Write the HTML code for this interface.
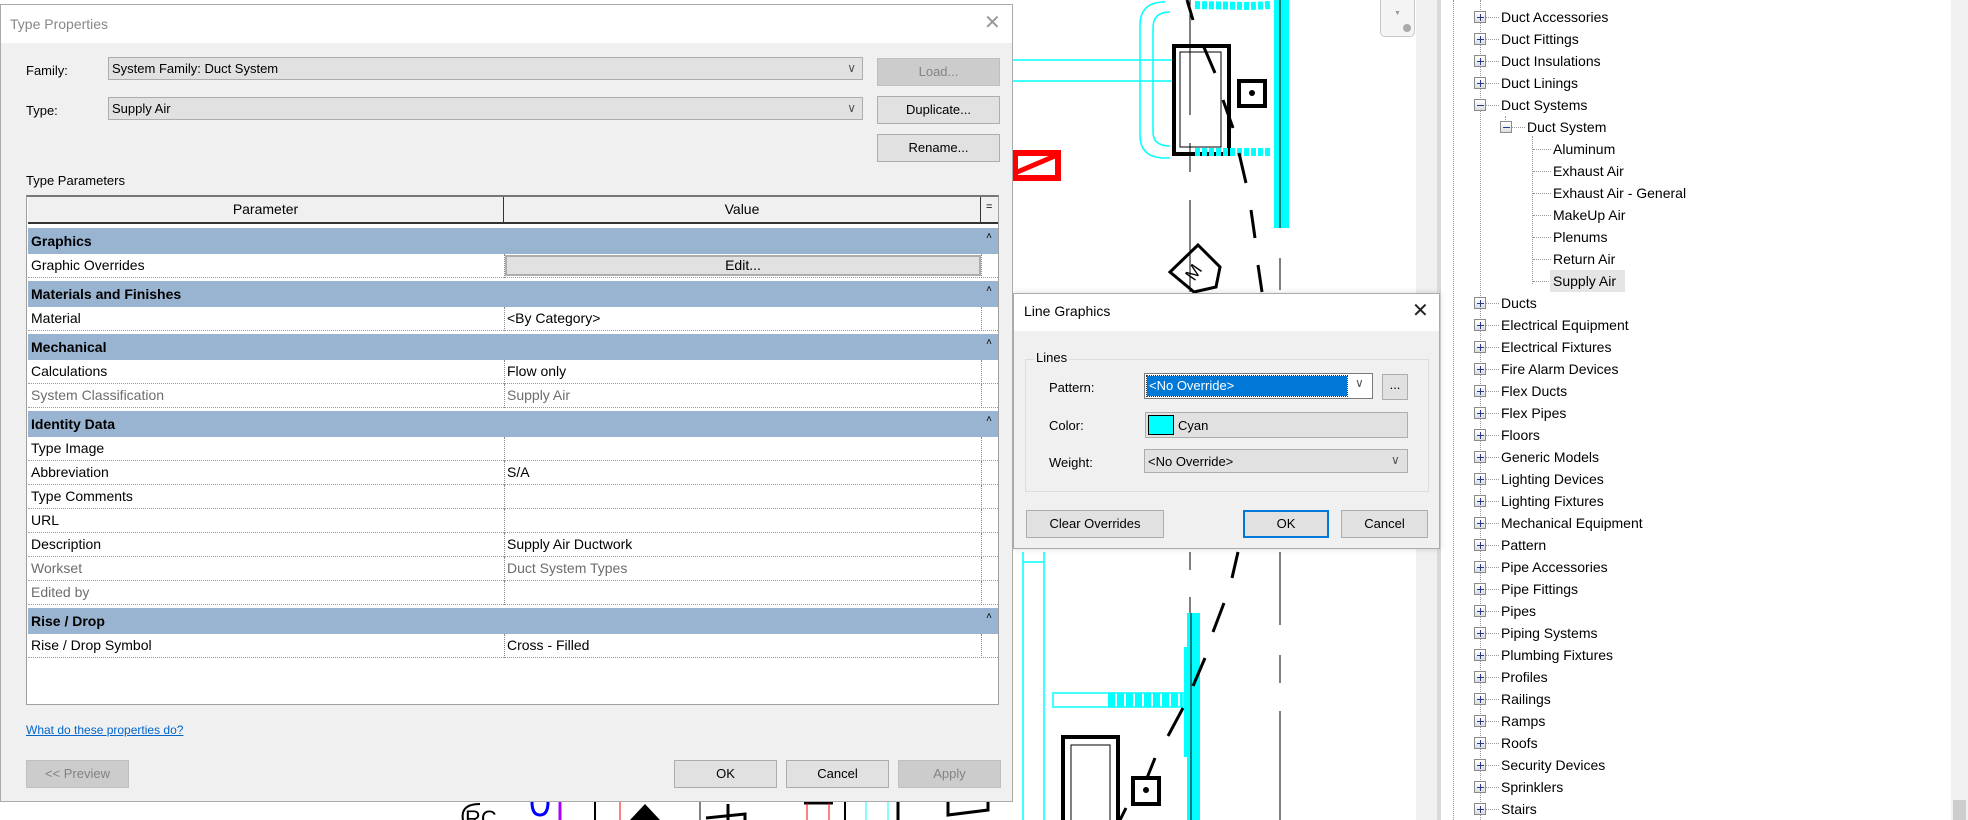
<!DOCTYPE html>
<html><head><meta charset="utf-8">
<style>
*{box-sizing:border-box;margin:0;padding:0}
body{width:1968px;height:820px;overflow:hidden;background:#fff;font-family:"Liberation Sans",sans-serif;font-size:13px;color:#000;position:relative}
.a{position:absolute}
.btn{position:absolute;background:#e1e1e1;border:1px solid #adadad;text-align:center;font-size:13px}
.dis{background:#cccccc;border-color:#bfbfbf;color:#838383}
.band{position:absolute;left:27px;width:970px;height:26px;background:#99b4d1;font-weight:bold;font-size:14px;line-height:26px;padding-left:3px}
.band:after{content:"\02C4";position:absolute;right:6px;top:-4px;font-size:10px;font-weight:normal}
.row{position:absolute;left:27px;width:970px;height:24px;border-bottom:1px dotted #999;font-size:14px;line-height:22px;background:#fff}
.row span{position:absolute;left:3px}
.row .v{left:479px}
.row:before{content:"";position:absolute;left:476px;top:0;height:24px;border-left:1px dotted #888}
.row:after{content:"";position:absolute;left:953px;top:0;height:24px;border-left:1px dotted #888}
.g{color:#6d6d6d}
.ti{position:absolute;font-size:14px;line-height:18px}
.pb{position:absolute;width:12px;height:12px;border:1px solid #8a8a8a;background:linear-gradient(#fff,#ddd)}
.pb:before{content:"";position:absolute;left:2px;top:5px;width:7px;height:1px;background:#2a3a8a}
.pb.p:after{content:"";position:absolute;left:5px;top:2px;width:1px;height:7px;background:#2a3a8a}
.dh{position:absolute;height:0;border-top:1px dotted #999}
.dv{position:absolute;width:0;border-left:1px dotted #999}
</style></head><body>

<!-- CAD drawing background -->
<svg class="a" style="left:0;top:0" width="1968" height="820">
<!-- top cad -->
<line x1="1013" y1="60" x2="1175" y2="60" stroke="#0ff" stroke-width="1.5"/>
<line x1="1013" y1="81" x2="1175" y2="81" stroke="#0ff" stroke-width="1.5"/>
<path d="M1165 2 Q1140 2 1140 25 L1140 135 Q1140 158 1165 158 L1170 158" fill="none" stroke="#0ff" stroke-width="1.5"/>
<path d="M1170 12 Q1153 12 1153 28 L1153 132 Q1153 146 1170 146" fill="none" stroke="#0ff" stroke-width="1.5"/>
<rect x="1174" y="46" width="55" height="108" fill="none" stroke="#000" stroke-width="4"/>
<rect x="1180" y="52" width="41" height="95" fill="none" stroke="#000" stroke-width="1"/>
<line x1="1190" y1="0" x2="1190" y2="115" stroke="#000" stroke-width="1"/>
<line x1="1190" y1="143" x2="1190" y2="172" stroke="#000" stroke-width="1"/>
<line x1="1190" y1="200" x2="1190" y2="292" stroke="#000" stroke-width="1"/>
<rect x="1239" y="81" width="26" height="25" fill="none" stroke="#000" stroke-width="4"/>
<circle cx="1252" cy="93" r="3" fill="#000"/>
<path d="M1195 5 L1250 6 L1270 5" stroke="#0ff" stroke-width="8" stroke-dasharray="5 2" fill="none"/>
<path d="M1195 152 L1270 152" stroke="#0ff" stroke-width="8" stroke-dasharray="5 2" fill="none"/>
<rect x="1274" y="0" width="15" height="228" fill="#0ff"/>
<line x1="1280" y1="0" x2="1280" y2="228" stroke="#000" stroke-width="1"/>
<rect x="1015" y="153" width="43" height="25" fill="none" stroke="#f00" stroke-width="6"/>
<line x1="1015" y1="173" x2="1055" y2="156" stroke="#f00" stroke-width="5"/>
<path d="M1187 0 L1193 20 M1203 45 L1215 73 M1223 100 L1233 128 M1239 153 L1246 183 M1251 210 L1255 238" stroke="#000" stroke-width="3"/>
<path d="M1258 265 L1262 292" stroke="#000" stroke-width="3"/>
<line x1="1280" y1="258" x2="1280" y2="290" stroke="#000" stroke-width="1"/>
<path d="M1198 245 L1220 267 L1216 287 L1194 292 L1170 272 Z" fill="none" stroke="#000" stroke-width="3"/>
<text x="1186" y="280" font-size="18" transform="rotate(-55 1192 273)" font-family="Liberation Sans">M</text>
<!-- bottom cad -->
<line x1="1023" y1="552" x2="1023" y2="820" stroke="#0ff" stroke-width="1.5"/>
<line x1="1044" y1="552" x2="1044" y2="820" stroke="#0ff" stroke-width="1.5"/>
<line x1="1023" y1="562" x2="1044" y2="562" stroke="#0ff" stroke-width="1.5"/>
<line x1="1190" y1="552" x2="1190" y2="570" stroke="#000"/>
<line x1="1190" y1="597" x2="1190" y2="820" stroke="#000"/>
<line x1="1280" y1="552" x2="1280" y2="625" stroke="#000"/>
<line x1="1280" y1="655" x2="1280" y2="683" stroke="#000"/>
<line x1="1280" y1="711" x2="1280" y2="820" stroke="#000"/>
<rect x="1187" y="613" width="13" height="207" fill="#0ff"/>
<rect x="1184" y="647" width="16" height="110" fill="#0ff"/>
<line x1="1191" y1="613" x2="1191" y2="820" stroke="#000"/>
<rect x="1053" y="693" width="130" height="14" fill="none" stroke="#0ff" stroke-width="1.5"/>
<path d="M1108 700 L1182 700" stroke="#0ff" stroke-width="14" stroke-dasharray="7 2"/>
<path d="M1238 552 L1232 578 M1224 603 L1213 632 M1205 658 L1193 686 M1183 708 L1168 736 M1155 758 L1147 778 M1126 808 L1120 820" stroke="#000" stroke-width="3"/>
<path d="M1063 820 L1063 737 L1118 737 L1118 820" fill="none" stroke="#000" stroke-width="4"/>
<rect x="1071" y="745" width="39" height="80" fill="none" stroke="#000" stroke-width="1"/>
<rect x="1133" y="778" width="26" height="26" fill="none" stroke="#000" stroke-width="4"/>
<circle cx="1146" cy="790" r="3" fill="#000"/>
<!-- below type properties -->
<path d="M463 820 Q460 804 480 804" fill="none" stroke="#000" stroke-width="2"/>
<text x="465" y="826" font-size="22" font-family="Liberation Sans">RC</text>
<path d="M532 802 Q532 815 540 815 Q548 815 548 802" fill="none" stroke="#00f" stroke-width="3"/>
<line x1="560" y1="802" x2="560" y2="820" stroke="#a0f" stroke-width="3"/>
<line x1="595" y1="802" x2="595" y2="820" stroke="#000" stroke-width="2"/>
<line x1="620" y1="802" x2="620" y2="820" stroke="#f00" stroke-width="1"/>
<path d="M630 820 L645 804 L660 820 Z" fill="#000"/>
<line x1="700" y1="802" x2="700" y2="820" stroke="#000"/>
<path d="M706 818 L745 814 L745 820 M728 804 L728 820" fill="none" stroke="#000" stroke-width="3"/>
<path d="M804 803 L833 803" stroke="#000" stroke-width="3"/>
<line x1="807" y1="803" x2="807" y2="820" stroke="#f00"/>
<line x1="829" y1="803" x2="829" y2="820" stroke="#f00"/>
<line x1="845" y1="802" x2="845" y2="820" stroke="#000" stroke-width="2"/>
<line x1="866" y1="802" x2="866" y2="820" stroke="#0ff"/>
<line x1="888" y1="802" x2="888" y2="820" stroke="#0ff"/>
<line x1="898" y1="802" x2="898" y2="820" stroke="#000" stroke-width="3"/>
<path d="M948 802 L948 815 L988 810 L988 802" fill="none" stroke="#000" stroke-width="3"/>
</svg>

<!-- zoom nav widget -->
<div class="a" style="left:1380px;top:-6px;width:35px;height:43px;border:1px solid #c8c8c8;border-radius:5px;background:#f4f4f4"></div>
<div class="a" style="left:1394px;top:10px;font-size:7px;color:#999">&#9660;</div>
<div class="a" style="left:1403px;top:24px;width:8px;height:8px;border-radius:50%;background:#aaa"></div>
<!-- gray strip -->
<div class="a" style="left:1416px;top:0;width:21px;height:820px;background:#f0f0f0"></div>
<div class="a" style="left:1437px;top:0;width:4px;height:820px;background:#d9d9d9"></div>

<!-- project browser tree -->
<div class="a" style="left:1441px;top:0;width:510px;height:820px;background:#fff"></div>
<div class="a" style="left:1951px;top:0;width:17px;height:820px;background:#f0f0f0"></div>
<div class="a" style="left:1953px;top:800px;width:13px;height:20px;background:#cdcdcd"></div>
<div class="dv" style="left:1453px;top:0;height:820px"></div>
<div class="dv" style="left:1480px;top:0;height:820px"></div>
<div class="dv" style="left:1505px;top:116px;height:6px"></div>
<div class="dv" style="left:1532px;top:136px;height:148px"></div>
<div id="tree"></div>

<!-- Line Graphics dialog -->
<div class="a" style="left:1013px;top:293px;width:427px;height:256px;background:#f0f0f0;border:1px solid #aaa;box-shadow:0 0 6px rgba(0,0,0,.15)">
  <div class="a" style="left:0;top:0;width:425px;height:37px;background:#fff"></div>
  <div class="a" style="left:10px;top:9px;font-size:14px">Line Graphics</div>
  <div class="a" style="left:398px;top:4px;font-size:20px;font-weight:100;color:#222">&#x2715;</div>
  <div class="a" style="left:11px;top:65px;width:404px;height:133px;border:1px solid #dcdcdc"></div>
  <div class="a" style="left:20px;top:56px;background:#f0f0f0;padding:0 2px;font-size:13px">Lines</div>
  <div class="a" style="left:35px;top:86px;font-size:13px">Pattern:</div>
  <div class="a" style="left:35px;top:124px;font-size:13px">Color:</div>
  <div class="a" style="left:35px;top:161px;font-size:13px">Weight:</div>
  <div class="a" style="left:130px;top:79px;width:229px;height:26px;background:#fff;border:1px solid #7a7a7a">
    <div class="a" style="left:2px;top:2px;width:200px;height:20px;background:#0078d7;outline:1px dotted #333;color:#fff;font-size:13px;line-height:20px;padding-left:2px">&lt;No Override&gt;</div>
    <div class="a" style="left:210px;top:2px;font-size:12px;color:#555">&#x2228;</div>
  </div>
  <div class="btn" style="left:368px;top:80px;width:26px;height:26px;line-height:20px">...</div>
  <div class="a" style="left:131px;top:118px;width:263px;height:26px;background:#e1e1e1;border:1px solid #adadad">
    <div class="a" style="left:2px;top:2px;width:26px;height:20px;background:#0ff;border:1px solid #000"></div>
    <div class="a" style="left:32px;top:5px;font-size:13px">Cyan</div>
  </div>
  <div class="a" style="left:130px;top:155px;width:264px;height:24px;background:#e1e1e1;border:1px solid #adadad">
    <div class="a" style="left:3px;top:4px;font-size:13px">&lt;No Override&gt;</div>
    <div class="a" style="left:246px;top:3px;font-size:12px;color:#555">&#x2228;</div>
  </div>
  <div class="btn" style="left:12px;top:216px;width:138px;height:28px;line-height:26px">Clear Overrides</div>
  <div class="btn" style="left:229px;top:216px;width:86px;height:28px;line-height:24px;border:2px solid #0078d7">OK</div>
  <div class="btn" style="left:327px;top:216px;width:87px;height:28px;line-height:26px">Cancel</div>
</div>

<!-- Type Properties dialog -->
<div class="a" style="left:0;top:4px;width:1013px;height:798px;background:#f0f0f0;border:1px solid #aaa">
  <div class="a" style="left:0;top:0;width:1011px;height:38px;background:#fff"></div>
  <div class="a" style="left:9px;top:11px;font-size:14px;color:#888">Type Properties</div>
  <div class="a" style="left:983px;top:5px;font-size:20px;color:#999">&#x2715;</div>
  <div class="a" style="left:25px;top:58px;font-size:13px">Family:</div>
  <div class="a" style="left:25px;top:98px;font-size:13px">Type:</div>
  <div class="a" style="left:107px;top:52px;width:755px;height:23px;background:#e1e1e1;border:1px solid #adadad;font-size:13px;line-height:21px;padding-left:3px">System Family: Duct System<span class="a" style="right:6px;top:0;color:#555;font-size:12px">&#x2228;</span></div>
  <div class="a" style="left:107px;top:92px;width:755px;height:23px;background:#e1e1e1;border:1px solid #adadad;font-size:13px;line-height:21px;padding-left:3px">Supply Air<span class="a" style="right:6px;top:0;color:#555;font-size:12px">&#x2228;</span></div>
  <div class="btn dis" style="left:876px;top:53px;width:123px;height:28px;line-height:26px">Load...</div>
  <div class="btn" style="left:876px;top:91px;width:123px;height:28px;line-height:26px">Duplicate...</div>
  <div class="btn" style="left:876px;top:129px;width:123px;height:28px;line-height:26px">Rename...</div>
  <div class="a" style="left:25px;top:168px;font-size:13px">Type Parameters</div>
  <!-- grid -->
  <div class="a" style="left:25px;top:190px;width:973px;height:510px;background:#fff;border:1px solid #a0a0a0;border-top:2px solid #777"></div>
  <div class="a" style="left:27px;top:192px;width:970px;height:27px;background:#f0f0f0;border-bottom:2px solid #333;font-size:14px">
    <div class="a" style="left:0;top:0;width:476px;height:25px;text-align:center;line-height:25px;border-right:1px solid #333">Parameter</div>
    <div class="a" style="left:476px;top:0;width:477px;height:25px;text-align:center;line-height:25px;border-right:1px solid #333">Value</div>
    <div class="a" style="left:958px;top:4px;font-size:11px">=</div>
  </div>
  <div class="band" style="top:223px">Graphics</div>
  <div class="row" style="top:249px"><span>Graphic Overrides</span><div class="a" style="left:477px;top:1px;width:476px;height:21px;background:#e1e1e1;border:2px solid #adadad;text-align:center;line-height:17px">Edit...</div></div>
  <div class="band" style="top:276px">Materials and Finishes</div>
  <div class="row" style="top:302px"><span>Material</span><span class="v">&lt;By Category&gt;</span></div>
  <div class="band" style="top:329px">Mechanical</div>
  <div class="row" style="top:355px"><span>Calculations</span><span class="v">Flow only</span></div>
  <div class="row g" style="top:379px"><span>System Classification</span><span class="v">Supply Air</span></div>
  <div class="band" style="top:406px">Identity Data</div>
  <div class="row" style="top:432px"><span>Type Image</span></div>
  <div class="row" style="top:456px"><span>Abbreviation</span><span class="v">S/A</span></div>
  <div class="row" style="top:480px"><span>Type Comments</span></div>
  <div class="row" style="top:504px"><span>URL</span></div>
  <div class="row" style="top:528px"><span>Description</span><span class="v">Supply Air Ductwork</span></div>
  <div class="row g" style="top:552px"><span>Workset</span><span class="v">Duct System Types</span></div>
  <div class="row g" style="top:576px"><span>Edited by</span></div>
  <div class="band" style="top:603px">Rise / Drop</div>
  <div class="row" style="top:629px"><span>Rise / Drop Symbol</span><span class="v">Cross - Filled</span></div>
  <div class="a" style="left:25px;top:718px;font-size:12px;color:#0066cc;text-decoration:underline">What do these properties do?</div>
  <div class="btn dis" style="left:25px;top:755px;width:103px;height:28px;line-height:26px">&lt;&lt; Preview</div>
  <div class="btn" style="left:673px;top:755px;width:103px;height:28px;line-height:26px">OK</div>
  <div class="btn" style="left:785px;top:755px;width:103px;height:28px;line-height:26px">Cancel</div>
  <div class="btn dis" style="left:897px;top:755px;width:103px;height:28px;line-height:26px">Apply</div>
</div>

<script>
var items=[["Duct Accessories",0,1],["Duct Fittings",0,1],["Duct Insulations",0,1],["Duct Linings",0,1],["Duct Systems",0,2],["Duct System",1,2],["Aluminum",2,0],["Exhaust Air",2,0],["Exhaust Air - General",2,0],["MakeUp Air",2,0],["Plenums",2,0],["Return Air",2,0],["Supply Air",2,3],["Ducts",0,1],["Electrical Equipment",0,1],["Electrical Fixtures",0,1],["Fire Alarm Devices",0,1],["Flex Ducts",0,1],["Flex Pipes",0,1],["Floors",0,1],["Generic Models",0,1],["Lighting Devices",0,1],["Lighting Fixtures",0,1],["Mechanical Equipment",0,1],["Pattern",0,1],["Pipe Accessories",0,1],["Pipe Fittings",0,1],["Pipes",0,1],["Piping Systems",0,1],["Plumbing Fixtures",0,1],["Profiles",0,1],["Railings",0,1],["Ramps",0,1],["Roofs",0,1],["Security Devices",0,1],["Sprinklers",0,1],["Stairs",0,1]];
var h="";
items.forEach(function(it,i){
 var y=17+i*22, lvl=it[1], bx=1474+lvl*26, tx=1501+lvl*26+(lvl==2?0:0);
 if(lvl==2){tx=1553;h+='<div class="dh" style="left:1533px;top:'+y+'px;width:18px"></div>';}
 else{h+='<div class="dh" style="left:'+(bx+12)+'px;top:'+y+'px;width:13px"></div>';
  h+='<div class="pb'+(it[2]==1?' p':'')+'" style="left:'+bx+'px;top:'+(y-6)+'px"></div>';}
 if(it[2]==3)h+='<div class="a" style="left:1550px;top:'+(y-11)+'px;width:75px;height:22px;background:#e5e5e5"></div>';
 h+='<div class="ti" style="left:'+tx+'px;top:'+(y-9)+'px">'+it[0]+'</div>';
});
document.getElementById("tree").innerHTML=h;
</script>
</body></html>
